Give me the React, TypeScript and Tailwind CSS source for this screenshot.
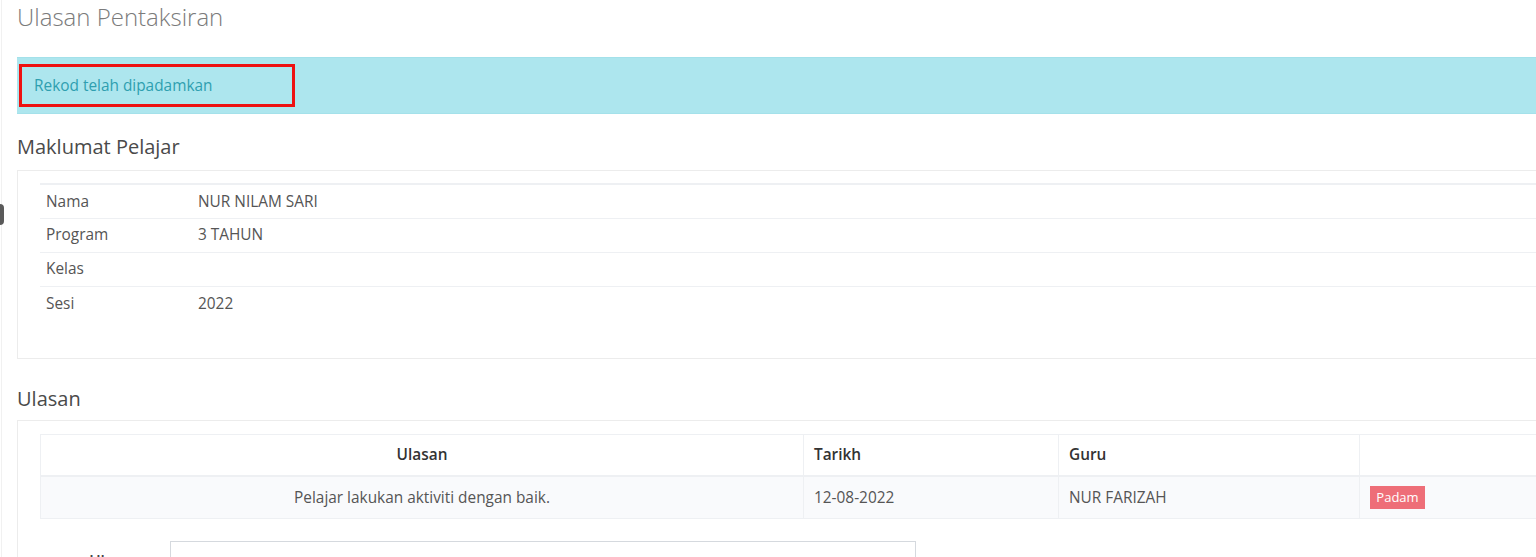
import type React from "react";

const font = { fontFamily: '"Open Sans", "Noto Sans", sans-serif' };

const studentRows = [
	{ label: "Nama", value: "NUR NILAM SARI" },
	{ label: "Program", value: "3 TAHUN" },
	{ label: "Kelas", value: "" },
	{ label: "Sesi", value: "2022" },
];

const SectionTitle: React.FC<{ children: React.ReactNode }> = ({ children }) => (
	<h2 className="text-[20px] leading-[26px] text-[#4a4a4a] font-normal">{children}</h2>
);

const App: React.FC = () => {
	return (
		<div className="relative w-[1536px] h-[557px] overflow-hidden bg-white" style={font}>
			{/* left edge line + handle */}
			<div className="absolute left-[1px] top-0 bottom-0 w-px bg-[#f1f1f1]" />
			<div className="absolute left-0 top-[204px] w-[4px] h-[21px] rounded-r-sm bg-[#5a5a5a]" />

			<div className="w-[1580px] pl-[17px]">
				{/* Page title */}
				<h1 className="text-[24px] leading-[34px] font-light text-[#7b7b7b]">
					Ulasan Pentaksiran
				</h1>

				{/* Alert */}
				<div className="mt-[23px] h-[57px] bg-[#ade6ee] border-t border-b border-[#a4e1ea] flex items-center pl-[2px]">
					<div className="w-[276px] h-[43px] border-[3px] border-[#ee1111] flex items-center pl-[12px]">
						<span className="text-[15.4px] text-[#2f9fb0]">Rekod telah dipadamkan</span>
					</div>
				</div>

				{/* Maklumat Pelajar */}
				<div className="mt-[20px]">
					<SectionTitle>Maklumat Pelajar</SectionTitle>
				</div>
				<div className="mt-[10px] border border-[#ececec] pt-[12px] pl-[22px] h-[189px]">
					<table className="w-full border-t-2 border-[#eef0f3] text-[15.4px] text-[#555]">
						<tbody>
							{studentRows.map((row, i) => (
								<tr
									key={row.label}
									className={i < studentRows.length - 1 ? "border-b border-[#eef0f3]" : ""}
								>
									<td className="w-[158px] pl-[6px] h-[34px] align-middle">{row.label}</td>
									<td className="align-middle">{row.value}</td>
								</tr>
							))}
						</tbody>
					</table>
				</div>

				{/* Ulasan */}
				<div className="mt-[27px]">
					<SectionTitle>Ulasan</SectionTitle>
				</div>
				<div className="mt-[8px] border border-[#ececec] pt-[13px] pl-[22px] pb-[20px]">
					<table className="w-full border border-[#eef0f3] text-[15.4px] text-[#555] border-collapse">
						<thead>
							<tr className="border-b-2 border-[#eef0f3] text-[#333]">
								<th className="w-[763px] h-[41px] font-semibold text-center border-r border-[#eef0f3]">
									Ulasan
								</th>
								<th className="w-[255px] font-semibold text-left pl-[10px] border-r border-[#eef0f3]">
									Tarikh
								</th>
								<th className="w-[301px] font-semibold text-left pl-[10px] border-r border-[#eef0f3]">
									Guru
								</th>
								<th />
							</tr>
						</thead>
						<tbody>
							<tr className="bg-[#f9fafc]">
								<td className="h-[43px] text-center border-r border-[#eef0f3]">
									Pelajar lakukan aktiviti dengan baik.
								</td>
								<td className="pl-[10px] border-r border-[#eef0f3]">12-08-2022</td>
								<td className="pl-[10px] border-r border-[#eef0f3]">NUR FARIZAH</td>
								<td className="pl-[10px]">
									<span className="inline-flex items-center justify-center w-[55px] h-[23px] bg-[#ee6e78] text-white text-[13px]">
										Padam
									</span>
								</td>
							</tr>
						</tbody>
					</table>

					<div className="mt-[22px] flex items-start">
						<label className="w-[130px] text-right pr-[30px] pt-[9px] text-[15.4px] font-semibold text-[#444]">
							Ulasan
						</label>
						<div className="w-[746px] h-[60px] border border-[#d5d9de]" />
					</div>
				</div>
			</div>
		</div>
	);
};

export default App;
